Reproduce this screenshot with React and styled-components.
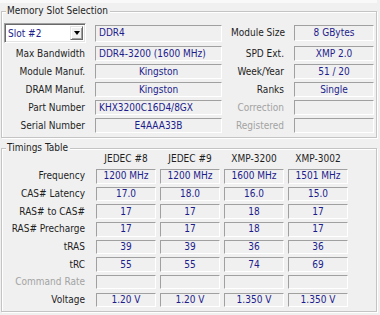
import React from 'react';
import styled, { createGlobalStyle } from 'styled-components';

const Global = createGlobalStyle`
  html, body { margin: 0; padding: 0; background: #f0f0f0; }
  body {
    font-family: "DejaVu Sans Condensed", "DejaVu Sans", sans-serif;
    font-stretch: condensed;
    font-size: 10px;
    color: #1e1e1e;
  }
`;

const Panel = styled.div`
  width: 377px;
  height: 315px;
  box-sizing: border-box;
  padding: 6px 0 0 1px;
  background: linear-gradient(#f9f9f9 0 3px, #f0f0f0 3px);
`;

const Group = styled.fieldset`
  width: 376px;
  box-sizing: border-box;
  margin: ${p => p.$mt || 0}px 0 0 0;
  padding: ${p => p.$pt}px 0 ${p => p.$pb}px 2px;
  border: 1px solid #c4c4c4;
  box-shadow: inset 1px 1px 0 #fff, 1px 1px 0 #fff;
  min-width: 0;
`;

const Legend = styled.legend`
  padding: 0 2px 0 1px;
  margin-left: 2px;
  line-height: 10px;
  font-size: 10px;
  background: #f0f0f0;
  color: #1e1e1e;
`;

const SlotGrid = styled.div`
  display: grid;
  grid-template-columns: 82px 127px 54px 80px;
  grid-template-rows: 20px repeat(5, 15px);
  column-gap: 9px;
  row-gap: 3px;
  align-items: center;
`;

const Label = styled.div`
  text-align: right;
  white-space: nowrap;
  padding-right: ${p => p.$pr || 1}px;
  color: ${p => (p.$off ? '#a3a3a3' : '#1e1e1e')};
  line-height: 12px;
`;

const Field = styled.div`
  height: ${p => p.$h || 15}px;
  box-sizing: border-box;
  border: 1px solid;
  border-color: #a0a0a0 #ffffff #ffffff #a0a0a0;
  background: #f0f0f0;
  color: #1c1c8c;
  display: flex;
  align-items: center;
  justify-content: ${p => (p.$left ? 'flex-start' : 'center')};
  padding: 0 3px;
  white-space: nowrap;
  overflow: hidden;
  line-height: 12px;
`;

const Combo = styled.div`
  height: 20px;
  box-sizing: border-box;
  border: 1px solid;
  border-color: #a0a0a0 #ffffff #ffffff #a0a0a0;
  box-shadow: inset 1px 1px 0 #696969, inset -1px -1px 0 #e3e3e3;
  background: #fff;
  display: flex;
  align-items: center;
  justify-content: space-between;
  padding: 0 2px 0 3px;
  color: #1c1c8c;
`;

const DropButton = styled.div`
  width: 13px;
  height: 14px;
  box-sizing: border-box;
  border: 1px solid;
  border-color: #e3e3e3 #696969 #696969 #e3e3e3;
  box-shadow: inset 1px 1px 0 #fff, inset -1px -1px 0 #a0a0a0;
  background: #f0f0f0;
  display: flex;
  align-items: center;
  justify-content: center;
`;

const Arrow = styled.div`
  width: 0;
  height: 0;
  border-left: 3.5px solid transparent;
  border-right: 3.5px solid transparent;
  border-top: 4px solid #000;
`;

const TimingGrid = styled.div`
  display: grid;
  grid-template-columns: 88px repeat(4, 60px);
  grid-template-rows: 13px repeat(8, 14.5px);
  column-gap: 4px;
  row-gap: 3.14px;
  align-items: center;
`;

const Head = styled.div`
  align-self: start;
  text-align: center;
  line-height: 10px;
  padding-top: 1px;
  white-space: nowrap;
  color: #1e1e1e;
`;

const slotRows = [
  ['Max Bandwidth', 'DDR4-3200 (1600 MHz)', true, 'SPD Ext.', 'XMP 2.0', false],
  ['Module Manuf.', 'Kingston', false, 'Week/Year', '51 / 20', false],
  ['DRAM Manuf.', 'Kingston', false, 'Ranks', 'Single', false],
  ['Part Number', 'KHX3200C16D4/8GX', true, 'Correction', '', true],
  ['Serial Number', 'E4AAA33B', false, 'Registered', '', true],
];

const timingRows = [
  ['Frequency', ['1200 MHz', '1200 MHz', '1600 MHz', '1501 MHz']],
  ['CAS# Latency', ['17.0', '18.0', '16.0', '15.0']],
  ['RAS# to CAS#', ['17', '17', '18', '17']],
  ['RAS# Precharge', ['17', '17', '18', '17']],
  ['tRAS', ['39', '39', '36', '36']],
  ['tRC', ['55', '55', '74', '69']],
  ['Command Rate', ['', '', '', ''], true],
  ['Voltage', ['1.20 V', '1.20 V', '1.350 V', '1.350 V']],
];

export default function App() {
  return (
    <>
      <Global />
      <Panel>
        <Group $pt={7} $pb={4}>
          <Legend>Memory Slot Selection</Legend>
          <SlotGrid>
            <Combo>
              <span>Slot #2</span>
              <DropButton>
                <Arrow />
              </DropButton>
            </Combo>
            <Field $h={17} $left>DDR4</Field>
            <Label>Module Size</Label>
            <Field $h={16}>8 GBytes</Field>
            {slotRows.map(([l1, v1, left, l2, v2, off]) => (
              <React.Fragment key={l1}>
                <Label>{l1}</Label>
                <Field $left={left}>{v1}</Field>
                <Label $off={off}>{l2}</Label>
                <Field>{v2}</Field>
              </React.Fragment>
            ))}
          </SlotGrid>
        </Group>
        <Group $mt={5} $pt={0} $pb={4}>
          <Legend>Timings Table</Legend>
          <TimingGrid>
            <div />
            <Head>JEDEC #8</Head>
            <Head>JEDEC #9</Head>
            <Head>XMP-3200</Head>
            <Head>XMP-3002</Head>
            {timingRows.map(([label, vals, off]) => (
              <React.Fragment key={label}>
                <Label $pr={7} $off={off}>{label}</Label>
                {vals.map((v, i) => (
                  <Field key={i} $h={14.5}>{v}</Field>
                ))}
              </React.Fragment>
            ))}
          </TimingGrid>
        </Group>
      </Panel>
    </>
  );
}
